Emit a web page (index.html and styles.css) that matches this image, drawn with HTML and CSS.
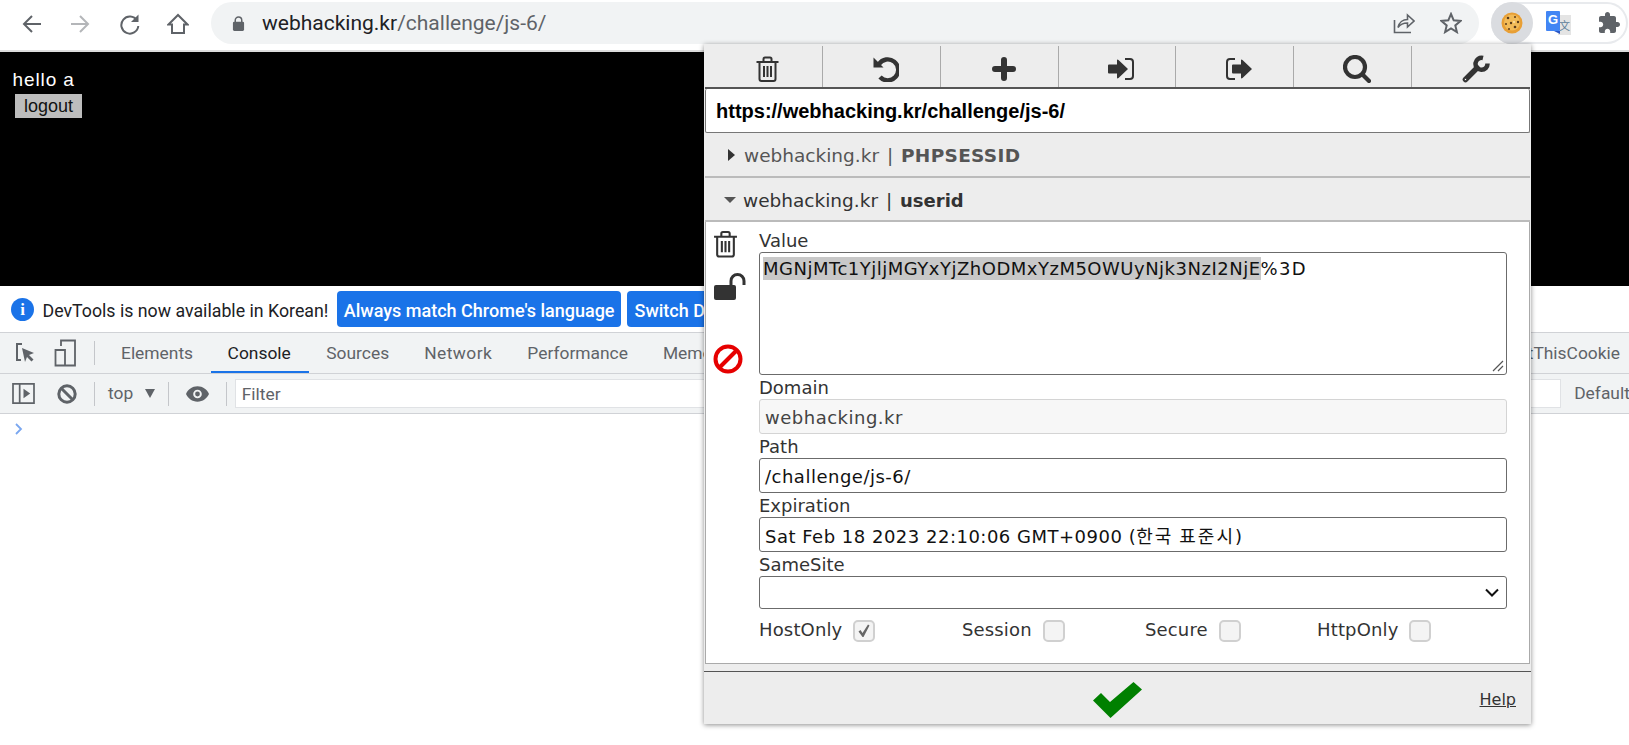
FILE: index.html
```html
<!DOCTYPE html>
<html lang="en">
<head>
<meta charset="utf-8">
<title>webhacking.kr</title>
<link rel="stylesheet" href="styles.css">
</head>
<body>
<header class="browser">
  <svg class="nav-icon nav-back" viewBox="0 0 22 22"><path d="M20 11H3M11 3l-8 8 8 8"/></svg>
  <svg class="nav-icon nav-fwd" viewBox="0 0 22 22"><path d="M2 11h17M11 3l8 8-8 8"/></svg>
  <svg class="nav-icon nav-reload" viewBox="0 0 22 22"><path d="M18 7.5A8.5 8.5 0 1 0 19.3 13"/><path class="solid" d="M19.5 1.5v7.5H12z"/></svg>
  <svg class="nav-icon nav-home" viewBox="0 0 22 22"><path d="M1.5 11.5 11 2l9.5 9.5H17v8.500H5v-8.500z"/></svg>
  <div class="omnibox">
    <svg class="lock" viewBox="0 0 14 16"><path d="M3.500 7V4.500a3.500 3.500 0 0 1 7 0V7" fill="none" stroke="#5f6368" stroke-width="1.6"/><rect x="1" y="6" width="12" height="10" rx="1.5" fill="#5f6368"/></svg>
    <span class="url"><span class="url-host">webhacking.kr</span>/challenge/js-6/</span>
    <svg class="omni-icon omni-share" viewBox="0 0 22 22"><path d="M1.500 8v12.500H18M5 15.500c1-5 5-8 9.500-8V3l6.500 6-6.500 6v-4c-4 0-7 1-9.500 4.500z"/></svg>
    <svg class="omni-icon omni-star" viewBox="0 0 22 22"><path d="m11 2 2.700 6.300 6.800.6-5.200 4.500 1.600 6.700-5.900-3.600-5.900 3.600 1.600-6.700-5.200-4.500 6.800-.6z"/></svg>
  </div>
  <div class="ext-pill">
    <span class="ext-active">
      <svg class="cookie" viewBox="0 0 22 22"><circle cx="11" cy="11" r="10.500" fill="#e89f35"/><circle cx="11" cy="10.500" r="8" fill="#f2bb58"/><g fill="#5a3a1a"><circle cx="7" cy="6" r="1.300"/><circle cx="14" cy="5" r="1"/><circle cx="17" cy="10" r="1.200"/><circle cx="10" cy="11" r="1.200"/><circle cx="5" cy="12" r="1"/><circle cx="14" cy="15" r="1.300"/><circle cx="8" cy="17" r="1"/></g><circle cx="13" cy="10" r="1" fill="#fbe3a8"/></svg>
    </span>
    <span class="translate">
      <span class="tr-back">文</span>
      <span class="tr-front">G</span>
    </span>
    <svg class="puzzle" viewBox="0 0 24 24"><path d="M20.500 11H19V7c0-1.100-.9-2-2-2h-4V3.500C13 2.120 11.880 1 10.500 1S8 2.120 8 3.500V5H4c-1.100 0-1.990.9-1.990 2v3.800H3.500c1.490 0 2.700 1.210 2.700 2.700s-1.210 2.700-2.700 2.700H2V20c0 1.100.9 2 2 2h3.800v-1.500c0-1.490 1.210-2.700 2.700-2.700 1.490 0 2.700 1.210 2.700 2.700V22H17c1.100 0 2-.9 2-2v-4h1.500c1.380 0 2.500-1.120 2.500-2.500S21.880 11 20.500 11z"/></svg>
  </div>
</header>

<main class="page">
  <div class="hello">hello a</div>
  <button class="logout">logout</button>
</main>

<section class="devtools">
  <div class="infobar">
    <span class="info-dot">i</span>
    <span class="info-text">DevTools is now available in Korean!</span>
    <span class="info-btn">Always match Chrome's language</span>
    <span class="info-btn">Switch DevTools to Korean</span>
  </div>
  <div class="tabbar">
    <svg class="dt-inspect" viewBox="0 0 20 22"><path d="M7 2H2v16h4" fill="none" stroke="#5f6368" stroke-width="2"/><path d="M7 6l12 5-5 2 4.500 4.500-2 2L12 15l-2 5z" fill="#5f6368"/></svg>
    <svg class="dt-device" viewBox="0 0 22 30"><path d="M7 8V2.500h14V27.500H11M1.500 12h9.500v15.500H1.500z" fill="none" stroke="#5f6368" stroke-width="1.800"/></svg>
    <span class="dt-sep"></span>
    <span class="tab">Elements</span>
    <span class="tab tab-active">Console</span>
    <span class="tab">Sources</span>
    <span class="tab tab-wide">Network</span>
    <span class="tab">Performance</span>
    <span class="tab">Memory</span>
    <span class="tab tab-end">EditThisCookie</span>
  </div>
  <div class="consolebar">
    <svg class="dt-sidebar" viewBox="0 0 24 22"><path d="M1 1h22v20H1zM8 1v20" fill="none" stroke="#5f6368" stroke-width="1.800"/><path d="M12 6v10l7-5z" fill="#5f6368"/></svg>
    <svg class="dt-ban" viewBox="0 0 20 20"><circle cx="10" cy="10" r="8.200" fill="none" stroke="#5f6368" stroke-width="3"/><path d="M4.500 4.500l11 11" stroke="#5f6368" stroke-width="3"/></svg>
    <span class="dt-sep"></span>
    <span class="ctx">top</span>
    <span class="ctx-arrow"></span>
    <span class="dt-sep"></span>
    <svg class="dt-eye" viewBox="0 0 24 16"><path fill="#5f6368" fill-rule="evenodd" d="M12 0c5.500 0 10 3.400 12 8-2 4.600-6.500 8-12 8S2 12.600 0 8c2-4.600 6.500-8 12-8zm0 3.500a4.500 4.500 0 1 0 0 9 4.500 4.500 0 0 0 0-9zm0 2a2.500 2.500 0 1 1 0 5 2.500 2.500 0 0 1 0-5z"/></svg>
    <span class="dt-sep"></span>
    <div class="filter">Filter</div>
    <span class="levels">Default levels</span>
  </div>
  <svg class="prompt" viewBox="0 0 9 12"><path d="M2 1l5 5-5 5" fill="none" stroke="#7aa7f0" stroke-width="1.800"/></svg>
</section>

<aside class="popup">
  <nav class="tools">
    <span class="tool"><svg class="ic-trash" viewBox="0 0 24 26"><path d="M1 6h22M8 6V3q0-1.500 1.500-1.500h5Q16 1.500 16 3v3M4 6v17q0 2 2 2h12q2 0 2-2V6M8.500 10v11M12 10v11M15.500 10v11"/></svg></span>
    <span class="tool"><svg class="ic-undo" viewBox="0 0 26 26"><path class="line" d="M6 8a10.500 10.500 0 1 1 1 13"/><path class="fill" d="M.5 1.500v10h10z"/></svg></span>
    <span class="tool"><svg class="ic-plus" viewBox="0 0 24 24"><path d="M12 3v18M3 12h18"/></svg></span>
    <span class="tool"><svg class="ic-door" viewBox="0 0 26 22"><path class="fill" d="M0 7.500q0-1 1-1h8V2.500q0-1.500 1.500-.5L20 11l-9.500 9q-1.500 1-1.500-.5v-4H1q-1 0-1-1z"/><path class="line" d="M17 1h5q3 0 3 3v14q0 3-3 3h-5"/></svg></span>
    <span class="tool"><svg class="ic-door" viewBox="0 0 26 22"><path class="line" d="M9 1H4Q1 1 1 4v14q0 3 3 3h5"/><path class="fill" d="M6 7.500q0-1 1-1h8V2.500q0-1.500 1.500-.5L26 11l-9.500 9q-1.500 1-1.500-.5v-4H7q-1 0-1-1z"/></svg></span>
    <span class="tool"><svg class="ic-search" viewBox="0 0 28 28"><circle cx="12" cy="12" r="10"/><path d="M19.500 19.500l6.500 6.500"/></svg></span>
    <span class="tool tool-last"><svg class="ic-wrench" viewBox="0 0 28 28"><path class="handle" d="M3.500 24.500 15 13"/><path class="head" d="M21 3a6 6 0 1 0 4.500 5.500"/><circle cx="3.500" cy="24.500" r="1.100" fill="#fff"/></svg></span>
  </nav>
  <div class="cookie-url">https://webhacking.kr/challenge/js-6/</div>
  <div class="cookie-row cookie-row-dim"><span class="tri-right"></span>webhacking.kr | <b>PHPSESSID</b></div>
  <div class="cookie-row cookie-row-open"><span class="tri-down"></span>webhacking.kr | <b>userid</b></div>
  <div class="editor">
    <div class="rail">
      <svg class="ic-trash rail-trash" viewBox="0 0 24 26"><path d="M1 6h22M8 6V3q0-1.500 1.500-1.500h5Q16 1.500 16 3v3M4 6v17q0 2 2 2h12q2 0 2-2V6M8.500 10v11M12 10v11M15.500 10v11"/></svg>
      <svg class="rail-lock" viewBox="0 0 32 27"><rect y="12" width="22" height="15" rx="2" fill="#333"/><path d="M17 13V8a6.500 6.500 0 0 1 13 0v4" fill="none" stroke="#333" stroke-width="3"/></svg>
      <svg class="rail-ban" viewBox="0 0 30 30"><circle cx="15" cy="15" r="12.500" fill="none" stroke="#e60000" stroke-width="4"/><path d="M6.500 23.500l17-17" stroke="#e60000" stroke-width="4"/></svg>
    </div>
    <div class="form">
      <div class="label">Value</div>
      <div class="field field-area"><span class="selected">MGNjMTc1YjljMGYxYjZhODMxYzM5OWUyNjk3NzI2NjE</span><span class="tail">%3D</span>
        <svg class="grip" viewBox="0 0 12 12"><path d="M1 11 11 1M6 11l5-5" stroke="#555" stroke-width="1.200"/></svg>
      </div>
      <div class="label">Domain</div>
      <div class="field field-off">webhacking.kr</div>
      <div class="label">Path</div>
      <div class="field">/challenge/js-6/</div>
      <div class="label">Expiration</div>
      <div class="field">Sat Feb 18 2023 22:10:06 GMT+0900 (<span class="ko">한국 표준시</span>)</div>
      <div class="label">SameSite</div>
      <div class="field field-select"><svg class="chev" viewBox="0 0 14 9"><path d="M1 1.500l6 6 6-6" fill="none" stroke="#111" stroke-width="2"/></svg></div>
      <div class="checks">
        <label class="check">HostOnly <span class="box box-on"><svg viewBox="0 0 14 14"><path d="M1.500 7.500l2-1.500 2 3L11 .5l1.500 1-6 11.500h-1z" fill="#666"/></svg></span></label>
        <label class="check">Session <span class="box"></span></label>
        <label class="check">Secure <span class="box"></span></label>
        <label class="check">HttpOnly <span class="box"></span></label>
      </div>
    </div>
  </div>
  <footer class="foot">
    <svg class="ic-ok" viewBox="0 0 49 36"><path d="M0 18.500 8 11l9 9L40.500 0 49 7.500 17.500 36z" fill="#008000"/></svg>
    <a class="help">Help</a>
  </footer>
</aside>
</body>
</html>
```

FILE: styles.css
```css
* { box-sizing: border-box; }
html, body { margin: 0; height: 100%; }
body { width: 1629px; height: 745px; overflow: hidden; background: #fff; font-family: Roboto, "Liberation Sans", sans-serif; position: relative; }

/* browser toolbar */
.browser { height: 52px; display: flex; align-items: flex-start; border-bottom: 2px solid #dcdcdc; background: #fff; }
.nav-icon { width: 22px; height: 22px; margin-top: 13px; fill: none; stroke: #5f6368; stroke-width: 2; }
.nav-icon .solid { fill: #5f6368; stroke: none; }
.nav-back { margin-left: 21px; }
.nav-fwd { margin-left: 26px; stroke: #b4b6b9; }
.nav-reload { margin-left: 28px; }
.nav-home { margin-left: 26px; }
.omnibox { margin: 2px 0 0 22px; width: 1268px; height: 42px; border-radius: 21px; background: #f1f3f4; display: flex; align-items: center; padding-left: 21px; }
.lock { width: 13px; height: 15px; flex: none; }
.url { margin-left: 17px; font-size: 21px; color: #5f6368; white-space: nowrap; }
.url-host { color: #202124; }
.omni-icon { width: 22px; height: 22px; fill: none; stroke: #5f6368; stroke-width: 1.600; flex: none; }
.omni-share { margin-left: auto; }
.omni-star { margin: 0 17px 0 25px; stroke-width: 2; }
.ext-pill { margin: 2px 0 0 12px; width: 137px; height: 42px; border: 2px solid #e8eaed; border-left: 0; border-radius: 21px; display: flex; align-items: center; }
.ext-active { width: 42px; height: 42px; border-radius: 50%; background: #dadce0; display: flex; align-items: center; justify-content: center; flex: none; }
.cookie { width: 22px; height: 22px; }
.translate { position: relative; width: 25px; height: 24px; margin-left: 13px; flex: none; display: block; }
.tr-back { position: absolute; right: 0; top: 4px; width: 13px; height: 20px; background: #e4e4e4; color: #5f7f9a; font: 11px/20px "Noto Sans CJK SC", sans-serif; text-align: center; }
.tr-front { position: absolute; left: 0; top: 0; width: 14px; height: 20px; background: #4285f4; color: #fff; font: bold 13px/18px "Liberation Sans", sans-serif; text-align: center; border-radius: 1px; }
.tr-front::after { content: ""; position: absolute; right: 0; top: 20px; border-top: 3px solid #2a56c6; border-left: 6px solid transparent; }
.puzzle { width: 24px; height: 24px; margin-left: 26px; fill: #5f6368; flex: none; }

/* page */
.page { height: 234px; background: #000; padding: 14px 0 0 12.500px; color: #fff; font-family: "Liberation Sans", sans-serif; }
.hello { font-size: 19px; line-height: 27px; letter-spacing: .9px; }
.logout { display: block; margin: 1px 0 0 2.500px; width: 67px; height: 24px; padding: 0; border: 0; background: #bdbdbd; color: #111; font: 18px/23px "Liberation Sans", sans-serif; }

/* devtools */
.devtools { color: #5f6368; }
.infobar { height: 47px; display: flex; align-items: center; padding-left: 11px; border-bottom: 1px solid #d0d2d6; white-space: nowrap; overflow: hidden; }
.info-dot { width: 23px; height: 23px; border-radius: 50%; background: #1a73e8; color: #fff; font: bold 17px/23px "Liberation Serif", serif; text-align: center; flex: none; }
.info-text { margin-left: 8.500px; padding-top: 3px; font-size: 17.750px; color: #202124; }
.info-btn { margin-left: 8.500px; height: 36px; border-radius: 4px; background: #1a73e8; color: #fff; font-weight: 500; font-size: 18px; line-height: 39px; padding: 0 7px; flex: none; }
.info-btn + .info-btn { margin-left: 6px; }
.tabbar { height: 41px; background: #f1f3f4; border-bottom: 1px solid #d0d2d6; display: flex; align-items: center; padding-left: 15px; }
.dt-inspect { width: 20px; height: 22px; flex: none; }
.dt-device { width: 22px; height: 30px; margin-left: 19px; flex: none; }
.dt-sep { width: 1px; height: 24px; background: #c4c6ca; margin-left: 18px; flex: none; }
.tab { height: 40px; line-height: 41px; padding: 0 17.500px; font-size: 17.400px; white-space: nowrap; flex: none; }
.tabbar .dt-sep + .tab { margin-left: 8.500px; }
.tab-active { color: #202124; border-bottom: 2px solid #1a73e8; padding: 0 18px 0 17px; }
.tab-wide { letter-spacing: .45px; }
.tab-end { margin-left: auto; padding-right: 9px; }
.consolebar { height: 40px; background: #f1f3f4; border-bottom: 1px solid #d0d2d6; display: flex; align-items: center; padding-left: 12px; white-space: nowrap; }
.dt-sidebar { width: 23px; height: 21px; flex: none; }
.dt-ban { width: 20px; height: 20px; margin-left: 22px; flex: none; }
.consolebar .dt-sep { margin-left: 17px; }
.ctx { margin-left: 13px; font-size: 17.400px; line-height: 41px; }
.ctx-arrow { margin-left: 12px; border: 5px solid transparent; border-top: 9px solid #5f6368; border-bottom: 0; flex: none; }
.consolebar .ctx-arrow + .dt-sep { margin-left: 13px; }
.dt-eye { width: 23px; height: 16px; margin-left: 17px; flex: none; }
.filter { width: 1326px; height: 29px; margin-left: 8px; background: #fff; border: 1px solid #e0e2e5; padding-left: 5.500px; line-height: 28px; font-size: 17.400px; flex: none; }
.levels { margin-left: 13px; font-size: 17.400px; line-height: 41px; }
.prompt { display: block; width: 9px; height: 12px; margin: 9px 0 0 14px; }

/* cookie editor popup */
.popup { position: absolute; left: 704px; top: 44px; width: 827px; height: 680px; background: #ededed; box-shadow: 0 1px 5px rgba(0,0,0,.45); font-family: "DejaVu Sans", sans-serif; color: #333; }
.tools { height: 45px; padding-top: 2px; display: grid; grid-template-columns: repeat(7, 1fr); border-bottom: 2px solid #555; margin: 0 1px; }
.tool { display: flex; align-items: center; justify-content: center; padding: 4px 0 0 9px; border-right: 1px solid #aaa; }
.tool-last { border-right: 0; }
.ic-trash { width: 25px; height: 26px; fill: none; stroke: #333; stroke-width: 2; }
.ic-undo { width: 26px; height: 26px; }
.ic-undo .line { fill: none; stroke: #333; stroke-width: 4.400; }
.ic-undo .fill { fill: #333; }
.ic-plus { width: 24px; height: 24px; fill: none; stroke: #333; stroke-width: 6; stroke-linecap: round; }
.ic-door { width: 26px; height: 22px; }
.ic-door .fill { fill: #333; }
.ic-door .line { fill: none; stroke: #333; stroke-width: 2; }
.ic-search { width: 28px; height: 28px; fill: none; stroke: #333; stroke-width: 4.200; stroke-linecap: round; }
.ic-wrench { width: 28px; height: 28px; fill: none; stroke: #333; }
.ic-wrench .handle { stroke-width: 5.500; stroke-linecap: round; }
.ic-wrench .head { stroke-width: 4.500; }
.cookie-url { height: 44px; margin: 0 1px; background: #fff; border: 1px solid #777; border-top: 0; border-radius: 2px; padding-left: 10px; color: #000; font: bold 20px/45px "Liberation Sans", sans-serif; }
.cookie-row { height: 45px; margin: 0 1px; padding: 1px 0 0 19px; display: flex; align-items: center; border-bottom: 2px solid #bbb; font-size: 18.500px; word-spacing: 2px; white-space: pre; }
.cookie-row-open { height: 44px; padding-top: 2px; }
.cookie-row b { font-weight: bold; letter-spacing: .3px; }
.cookie-row-open b { letter-spacing: 0; font-size: 18px; }
.cookie-row-dim { color: #555; }
.tri-right { width: 0; height: 0; margin: 0 9px 0 4px; border: 6px solid transparent; border-left: 7px solid #333; border-right: 0; }
.tri-down { width: 0; height: 0; margin: 0 7px 0 0; border: 6.500px solid transparent; border-top: 6px solid #555; border-bottom: 0; }
.editor { height: 442px; margin: 0 1px; background: #fff; border: 1px solid #aaa; border-top: 0; display: flex; }
.rail { width: 53px; flex: none; display: flex; flex-direction: column; align-items: flex-start; padding: 8px 0 0 7px; }
.rail-trash { width: 25px; height: 28px; flex: none; }
.rail-lock { width: 32px; height: 27px; margin: 15px 0 0 1px; flex: none; }
.rail-ban { width: 30px; height: 30px; margin-top: 44px; flex: none; }
.form { width: 748px; padding-top: 6px; font-size: 18px; }
.label { height: 24px; line-height: 26px; }
.field { height: 35px; border: 1px solid #6b6b6b; border-radius: 3px; padding-left: 5px; line-height: 35px; letter-spacing: .5px; color: #111; white-space: nowrap; }
.field-area { height: 123px; position: relative; padding: 4px 0 0 3px; line-height: 23px; }
.selected { display: inline-block; height: 23px; background: #c8c8c8; }
.tail { letter-spacing: 1.300px; }
.grip { position: absolute; right: 2px; bottom: 2px; width: 12px; height: 12px; }
.field-off { background: #f7f7f7; border-color: #d4d4d4; color: #444; }
.field-select { height: 33px; display: flex; align-items: center; justify-content: flex-end; padding-right: 7px; }
.chev { width: 14px; height: 9px; }
.ko { font-family: "Noto Sans CJK KR", sans-serif; font-size: 18px; letter-spacing: 2px; }
.checks { display: grid; grid-template-columns: 203px 183px 172px auto; margin-top: 11px; }
.check { display: flex; align-items: flex-start; white-space: pre; height: 22px; line-height: 19px; letter-spacing: .15px; }
.box { width: 22px; height: 22px; border: 2px solid #d0d0d0; border-radius: 5px; background: #f4f4f4; display: flex; align-items: center; justify-content: center; margin-left: 5px; flex: none; }
.box svg { width: 14px; height: 14px; }
.foot { margin-top: 7px; height: 53px; border-top: 1px solid #555; position: relative; display: flex; align-items: center; justify-content: center; }
.ic-ok { width: 49px; height: 36px; margin: 4px 0 0 -1px; }
.help { position: absolute; right: 15px; top: 18px; font-size: 16px; line-height: 20px; text-decoration: underline; color: #333; }
```
